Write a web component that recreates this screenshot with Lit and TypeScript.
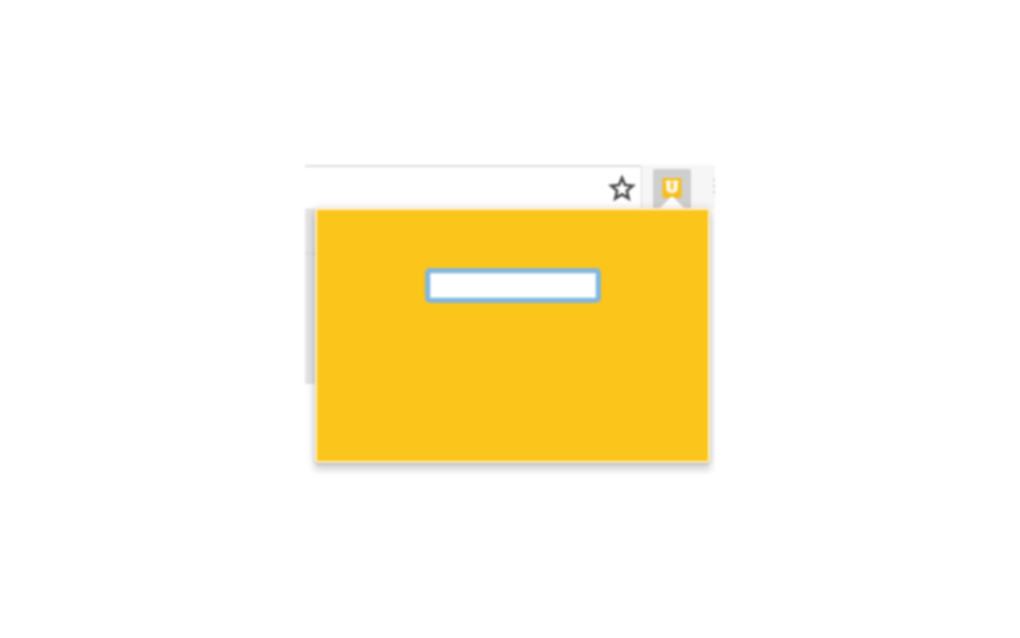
import { LitElement, html, css } from "lit";
import { customElement } from "lit/decorators.js";

@customElement("app-root")
export class AppRoot extends LitElement {
  static styles = css`
    :host { display: block; height: 638px; background: #fff; overflow: hidden; font-family: "Liberation Sans", sans-serif; }
    .stage { padding: 165px 0 0 305px; }
    .clip { position: relative; width: 410px; height: 309px; overflow: hidden; background: #fff; filter: blur(0.8px); }
    .toolbar { display: flex; height: 44px; background: #f6f6f6; }
    .address { flex: 0 0 337px; box-sizing: border-box; display: flex; justify-content: flex-end; align-items: center; padding: 0 5px 0 0; background: #fff; border-top: 2px solid #dcdcdc; border-right: 1px solid #dcdcdc; border-bottom: 1px solid #f0f0f0; border-radius: 0 3px 3px 0; }
    .star { width: 28px; height: 28px; display: block; }
    .actions { flex: 1; display: flex; padding: 4px 0 0 11px; gap: 22px; }
    .ext { position: relative; width: 38px; height: 40px; background: #cfcfcf; border-radius: 2px; display: flex; justify-content: center; padding-top: 9px; box-sizing: border-box; }
    .badge { width: 20px; height: 20px; display: block; }
    .caret { position: absolute; left: 6px; bottom: 0; width: 0; height: 0; border-left: 13px solid transparent; border-right: 13px solid transparent; border-bottom: 13px solid #fff; }
    .dots { display: flex; flex-direction: column; gap: 4px; padding-top: 10px; }
    .dots i { display: block; width: 2px; height: 2px; background: #cccccc; }
    .page { display: flex; height: 265px; background: #fff; }
    .rail { flex: 0 0 11px; height: 175px; box-sizing: border-box; background: #e4e4e4; }
    .rail div { height: 44px; border-bottom: 1px solid #d0d0d0; }
    .popup { position: absolute; left: 10px; top: 43px; width: 395px; height: 255px; box-sizing: border-box; background: #fbc51c; border: 2px solid #fff0c4; border-radius: 3px; box-shadow: 0 1px 2px rgba(0,0,0,.2), 0 7px 7px 1px rgba(0,0,0,.13), 0 0 9px 1px rgba(0,0,0,.1); display: flex; justify-content: center; padding: 58px 0 0 0; }
    .field { width: 176px; height: 35px; box-sizing: border-box; background: #fff; border: 5px solid #85b6dc; border-radius: 5px; box-shadow: inset 0 0 1px 1px #d9ecfb; }
  `;

  render() {
    return html`
      <div class="stage">
        <div class="clip">
          <div class="toolbar">
            <div class="address">
              <svg class="star" viewBox="0 0 26 26" fill="none" stroke="#484848" stroke-width="2.400" stroke-linejoin="miter">
                <path d="M13 3.500l2.800 6.800 7.200.6-5.500 4.700 1.700 7.100-6.200-3.800-6.200 3.800 1.700-7.100L3 10.900l7.200-.6z" />
              </svg>
            </div>
            <div class="actions">
              <div class="ext">
                <svg class="badge" viewBox="0 0 19 20">
                  <rect width="19" height="20" rx="1" fill="#f5bd1f" />
                  <path d="M3 2.500h6v1.800h-.7v5.900c0 1.100.4 1.600 1.200 1.600s1.200-.5 1.200-1.600V4.300H10V2.500h6v1.800h-.7v6.400c0 2.700-2.200 4.200-5.800 4.200s-5.800-1.500-5.800-4.200V4.300H3z" fill="#fff8e2" />
                </svg>
                <span class="caret"></span>
              </div>
              <div class="dots"><i></i><i></i><i></i></div>
            </div>
          </div>
          <div class="page"><div class="rail"><div></div></div></div>
          <div class="popup"><div class="field"></div></div>
        </div>
      </div>
    `;
  }
}
